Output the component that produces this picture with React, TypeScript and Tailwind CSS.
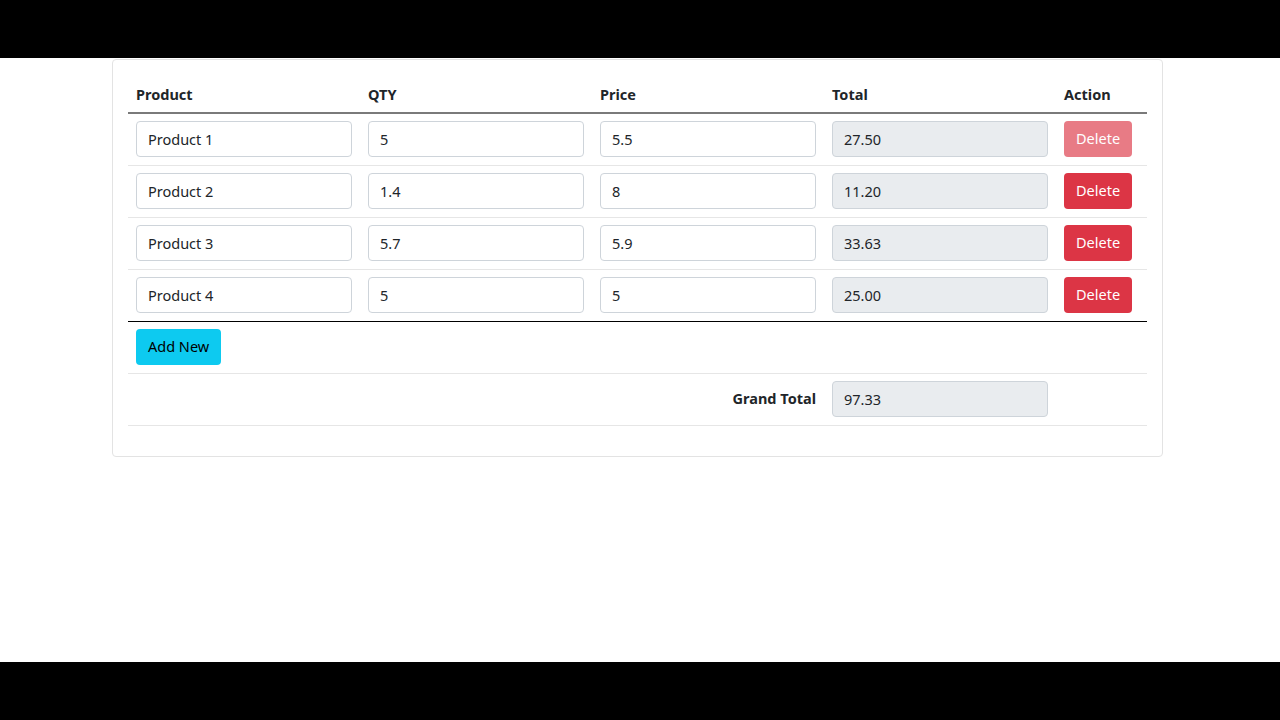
import React from 'react';

type Row = {
    product: string;
    qty: string;
    price: string;
};

const rows: Row[] = [
    { product: 'Product 1', qty: '5', price: '5.5' },
    { product: 'Product 2', qty: '1.4', price: '8' },
    { product: 'Product 3', qty: '5.7', price: '5.9' },
    { product: 'Product 4', qty: '5', price: '5' },
];

const inputCls =
    'block w-full h-9 rounded border border-[#ced4da] bg-white px-[11px] text-[14.5px] text-[#212529] outline-none';
const readCls =
    'block w-full h-9 rounded border border-[#ced4da] bg-[#e9ecef] px-[11px] text-[14.5px] text-[#212529] outline-none';

function lineTotal(r: Row): string {
    return (parseFloat(r.qty) * parseFloat(r.price)).toFixed(2);
}

export default function App() {
    const grand = rows.reduce((s, r) => s + parseFloat(r.qty) * parseFloat(r.price), 0).toFixed(2);

    return (
        <div className="flex h-[720px] w-[1280px] flex-col bg-black font-['Noto_Sans',sans-serif] text-[14.5px] text-[#212529]">
            <div className="h-[58px]" />
            <div className="h-[604px] bg-white pl-[112px] pt-px">
                <div className="w-[1051px] rounded border border-[#e3e3e3] px-[15px] pt-4 pb-[30px]">
                    <table className="w-[1019px] table-fixed border-collapse">
                        <colgroup>
                            <col className="w-[232px]" />
                            <col className="w-[232px]" />
                            <col className="w-[232px]" />
                            <col className="w-[232px]" />
                            <col className="w-[91px]" />
                        </colgroup>
                        <thead>
                            <tr className="border-b-2 border-[#7a7a7a] text-left align-middle">
                                <th className="h-[37px] px-2 pt-px font-bold">Product</th>
                                <th className="px-2 pt-px font-bold">QTY</th>
                                <th className="px-2 pt-px font-bold">Price</th>
                                <th className="px-2 pt-px font-bold">Total</th>
                                <th className="px-2 pt-px font-bold">Action</th>
                            </tr>
                        </thead>
                        <tbody>
                            {rows.map((r, i) => (
                                <tr key={r.product} className={i < rows.length - 1 ? 'border-b border-[#e6e6e6]' : ''}>
                                    <td className="h-[52px] px-2">
                                        <input className={inputCls} defaultValue={r.product} />
                                    </td>
                                    <td className="px-2">
                                        <input className={inputCls} defaultValue={r.qty} />
                                    </td>
                                    <td className="px-2">
                                        <input className={inputCls} defaultValue={r.price} />
                                    </td>
                                    <td className="px-2">
                                        <input className={readCls} value={lineTotal(r)} readOnly />
                                    </td>
                                    <td className="px-2">
                                        <button
                                            disabled={i === 0}
                                            className={`h-9 rounded bg-[#dc3545] px-3 text-[14.5px] text-white ${
                                                i === 0 ? 'opacity-65' : ''
                                            }`}
                                        >
                                            Delete
                                        </button>
                                    </td>
                                </tr>
                            ))}
                        </tbody>
                        <tfoot>
                            <tr className="border-t border-black border-b border-b-[#e6e6e6]">
                                <td className="h-[52px] px-2" colSpan={5}>
                                    <button className="h-9 rounded bg-[#0dcaf0] px-3 text-[14.5px] text-black">
                                        Add New
                                    </button>
                                </td>
                            </tr>
                            <tr className="border-b border-[#e6e6e6]">
                                <td className="h-[52px] px-2 text-right font-bold" colSpan={3}>
                                    Grand Total
                                </td>
                                <td className="px-2">
                                    <input className={readCls} value={grand} readOnly />
                                </td>
                                <td />
                            </tr>
                        </tfoot>
                    </table>
                </div>
            </div>
            <div className="flex-1" />
        </div>
    );
}
